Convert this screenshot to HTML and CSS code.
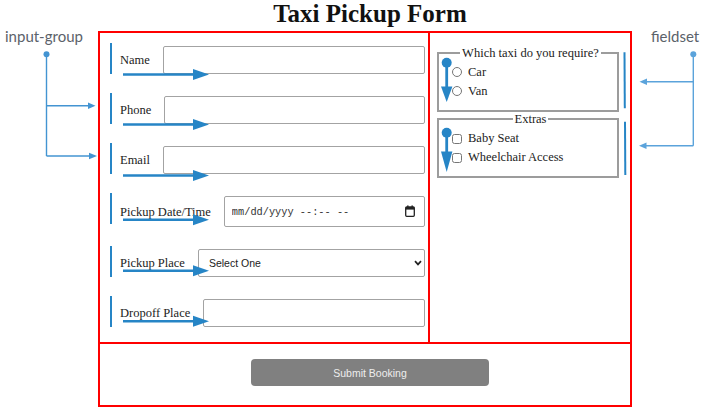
FILE: index.html
```html
<!DOCTYPE html>
<html lang="en">
<head>
<meta charset="utf-8">
<title>Taxi Pickup Form</title>
<link rel="stylesheet" href="styles.css">
</head>
<body>
<div class="page">
  <h1 class="title">Taxi Pickup Form</h1>
  <form class="booking">
    <div class="booking-top">
      <div class="col-left">
        <div class="input-group">
          <label for="name">Name</label>
          <input class="field" id="name" type="text">
        </div>
        <div class="input-group">
          <label for="phone">Phone</label>
          <input class="field" id="phone" type="tel">
        </div>
        <div class="input-group">
          <label for="email">Email</label>
          <input class="field" id="email" type="email">
        </div>
        <div class="input-group">
          <label for="pickup-time">Pickup Date/Time</label>
          <div class="control-wrap">
            <input class="field field-date" id="pickup-time" type="text" placeholder="mm/dd/yyyy --:-- --">
            <svg class="calendar" width="10" height="12" viewBox="0 0 10 12" aria-hidden="true">
              <rect x="0.7" y="2" width="8.6" height="9.3" rx="1" fill="none" stroke="#222" stroke-width="1.3"/>
              <rect x="0.7" y="2" width="8.6" height="2.6" fill="#222"/>
              <rect x="2.2" y="0.4" width="1.3" height="2.5" fill="#222"/>
              <rect x="6.5" y="0.4" width="1.3" height="2.5" fill="#222"/>
            </svg>
          </div>
        </div>
        <div class="input-group">
          <label for="pickup-place">Pickup Place</label>
          <div class="control-wrap">
            <select class="field field-select" id="pickup-place">
              <option>Select One</option>
            </select>
            <svg class="chevron" width="8" height="6" viewBox="0 0 8 6" aria-hidden="true"><path d="M1 1.2 L4 4.4 L7 1.2" fill="none" stroke="#222" stroke-width="1.7"/></svg>
          </div>
        </div>
        <div class="input-group">
          <label for="dropoff-place">Dropoff Place</label>
          <input class="field" id="dropoff-place" type="text">
        </div>
      </div>
      <div class="col-right">
        <fieldset class="box">
          <legend>Which taxi do you require?</legend>
          <div class="options">
            <label class="option"><input type="radio" name="taxi" value="car">Car</label>
            <label class="option"><input type="radio" name="taxi" value="van">Van</label>
          </div>
        </fieldset>
        <fieldset class="box">
          <legend>Extras</legend>
          <div class="options">
            <label class="option"><input type="checkbox" name="baby-seat">Baby Seat</label>
            <label class="option"><input type="checkbox" name="wheelchair">Wheelchair Access</label>
          </div>
        </fieldset>
      </div>
    </div>
    <div class="booking-bottom">
      <button class="submit" type="submit">Submit Booking</button>
    </div>
  </form>

  <div class="note note-left">input-group</div>
  <div class="note note-right">fieldset</div>

  <svg class="annotations" width="714" height="412" viewBox="0 0 714 412" aria-hidden="true">
    <g fill="#2685c6" stroke="#2685c6">
      <line x1="123" y1="74.5" x2="196" y2="74.5" stroke-width="2.6"/>
      <polygon points="193,69 209,74.5 193,80" stroke="none"/>
      <line x1="123" y1="124.5" x2="196" y2="124.5" stroke-width="2.6"/>
      <polygon points="193,119 209,124.5 193,130" stroke="none"/>
      <line x1="123" y1="175.5" x2="196" y2="175.5" stroke-width="2.6"/>
      <polygon points="193,170 209,175.5 193,181" stroke="none"/>
      <line x1="123" y1="219.7" x2="196" y2="219.7" stroke-width="2.6"/>
      <polygon points="193,214.2 209,219.7 193,225.2" stroke="none"/>
      <line x1="123" y1="270.7" x2="196" y2="270.7" stroke-width="2.6"/>
      <polygon points="193,265.2 209,270.7 193,276.2" stroke="none"/>
      <line x1="123" y1="321.3" x2="196" y2="321.3" stroke-width="2.6"/>
      <polygon points="193,315.8 209,321.3 193,326.8" stroke="none"/>

      <circle cx="446.7" cy="62.7" r="5" stroke="none"/>
      <line x1="446.7" y1="62.7" x2="446.7" y2="90" stroke-width="2.8"/>
      <polygon points="441,86.5 452.4,86.5 446.7,102" stroke="none"/>
      <circle cx="446.7" cy="132.7" r="5" stroke="none"/>
      <line x1="446.7" y1="132.7" x2="446.7" y2="155" stroke-width="2.8"/>
      <polygon points="441,151.5 452.4,151.5 446.7,172" stroke="none"/>

      <line x1="624.5" y1="52.3" x2="624.8" y2="108.3" stroke-width="2"/>
      <line x1="625" y1="121.7" x2="625.3" y2="175" stroke-width="2"/>
    </g>
    <g fill="#4394d2" stroke="#4394d2" stroke-width="1.4">
      <circle cx="46.5" cy="54.3" r="3" stroke="none"/>
      <line x1="46.5" y1="54.3" x2="46.5" y2="156"/>
      <line x1="46.5" y1="105.7" x2="89" y2="105.7"/>
      <polygon points="88,102.5 95.5,105.7 88,108.9" stroke="none"/>
      <line x1="46.5" y1="156" x2="90" y2="156"/>
      <polygon points="89,152.8 97,156 89,159.2" stroke="none"/>
    </g>
    <g fill="#5ba3db" stroke="#5ba3db" stroke-width="1.4">
      <circle cx="693.3" cy="54.3" r="3" stroke="none"/>
      <line x1="693.3" y1="54.3" x2="693.3" y2="145.7"/>
      <line x1="693.3" y1="81.7" x2="646" y2="81.7"/>
      <polygon points="647,78.5 639.5,81.7 647,84.9" stroke="none"/>
      <line x1="693.3" y1="145.7" x2="646" y2="145.7"/>
      <polygon points="646.5,142.5 639,145.7 646.5,148.9" stroke="none"/>
    </g>
  </svg>
</div>
</body>
</html>
```

FILE: styles.css
```css
* {
  box-sizing: border-box;
}

html,
body {
  margin: 0;
  padding: 0;
  background: #fff;
}

body {
  font-family: "Liberation Serif", "Times New Roman", serif;
  font-size: 12.5px;
  color: #222;
}

.page {
  position: relative;
  width: 714px;
  height: 412px;
  overflow: hidden;
}

.title {
  margin: 0 0 3px;
  padding-left: 26px;
  height: 28px;
  line-height: 28px;
  font-size: 25px;
  font-weight: bold;
  text-align: center;
  color: #111;
}

.booking {
  margin-left: 98px;
  width: 534px;
  height: 376px;
  border: 2px solid #f00;
  display: flex;
  flex-direction: column;
}

.booking-top {
  display: flex;
  height: 311px;
  border-bottom: 2px solid #f00;
}

.col-left {
  width: 330px;
  border-right: 2px solid #f00;
  padding: 13px 3px 0 10px;
  display: flex;
  flex-direction: column;
  gap: 22px;
}

.input-group {
  position: relative;
  display: flex;
  align-items: center;
  gap: 13px;
  padding-left: 10px;
}

.input-group::before {
  content: "";
  position: absolute;
  left: 0;
  top: -3px;
  width: 2px;
  height: 31px;
  background: #2685c6;
}

.input-group label {
  white-space: nowrap;
  line-height: 14px;
}

.field {
  flex: 1;
  min-width: 0;
  height: 28px;
  margin: 0;
  border: 1px solid #a3a3a3;
  border-radius: 2px;
  background: #fff;
  font-family: "Liberation Sans", Arial, sans-serif;
  font-size: 10.5px;
  color: #222;
  padding: 0 8px;
}

.control-wrap {
  flex: 1;
  position: relative;
  display: flex;
}

.field-date {
  width: 100%;
  height: 31px;
  font-family: "Liberation Mono", "Courier New", monospace;
  font-size: 10.3px;
  color: #333;
  padding: 0 24px 0 7px;
}

.field-date::placeholder {
  color: #333;
  opacity: 1;
}

.calendar {
  position: absolute;
  right: 10px;
  top: 9px;
  pointer-events: none;
}

.field-select {
  width: 100%;
  appearance: none;
  -webkit-appearance: none;
  padding: 0 20px 0 10px;
}

.chevron {
  position: absolute;
  right: 3px;
  top: 11px;
  pointer-events: none;
}

.col-right {
  flex: 1;
  padding: 12.5px 11px 0 7px;
}

.box {
  margin: 0;
  min-width: 0;
  border: 2px solid #9c9c9c;
  padding: 5px 8px 10.7px 13px;
}

.box legend {
  margin: 0 auto;
  padding: 0 2px;
  line-height: 14.4px;
}

.options {
  display: flex;
  flex-direction: column;
  gap: 4px;
}

.option {
  display: flex;
  align-items: center;
  gap: 6px;
  height: 15px;
}

.option input {
  margin: 0;
  width: 10px;
  height: 10px;
}

.booking-bottom {
  flex: 1;
  display: flex;
  justify-content: center;
  align-items: flex-start;
  padding: 15px 0 0 10px;
}

.submit {
  width: 238px;
  height: 27px;
  border: none;
  border-radius: 4px;
  background: #808080;
  color: #eee;
  font-family: "Liberation Sans", Arial, sans-serif;
  font-size: 10.5px;
}

.note {
  position: absolute;
  top: 27px;
  font-family: Lato, "Open Sans", sans-serif;
  font-size: 15px;
  line-height: 18px;
  color: #5b626a;
}

.note-left {
  left: 5px;
}

.note-right {
  left: 651px;
}

.annotations {
  position: absolute;
  left: 0;
  top: 0;
  pointer-events: none;
}
```
